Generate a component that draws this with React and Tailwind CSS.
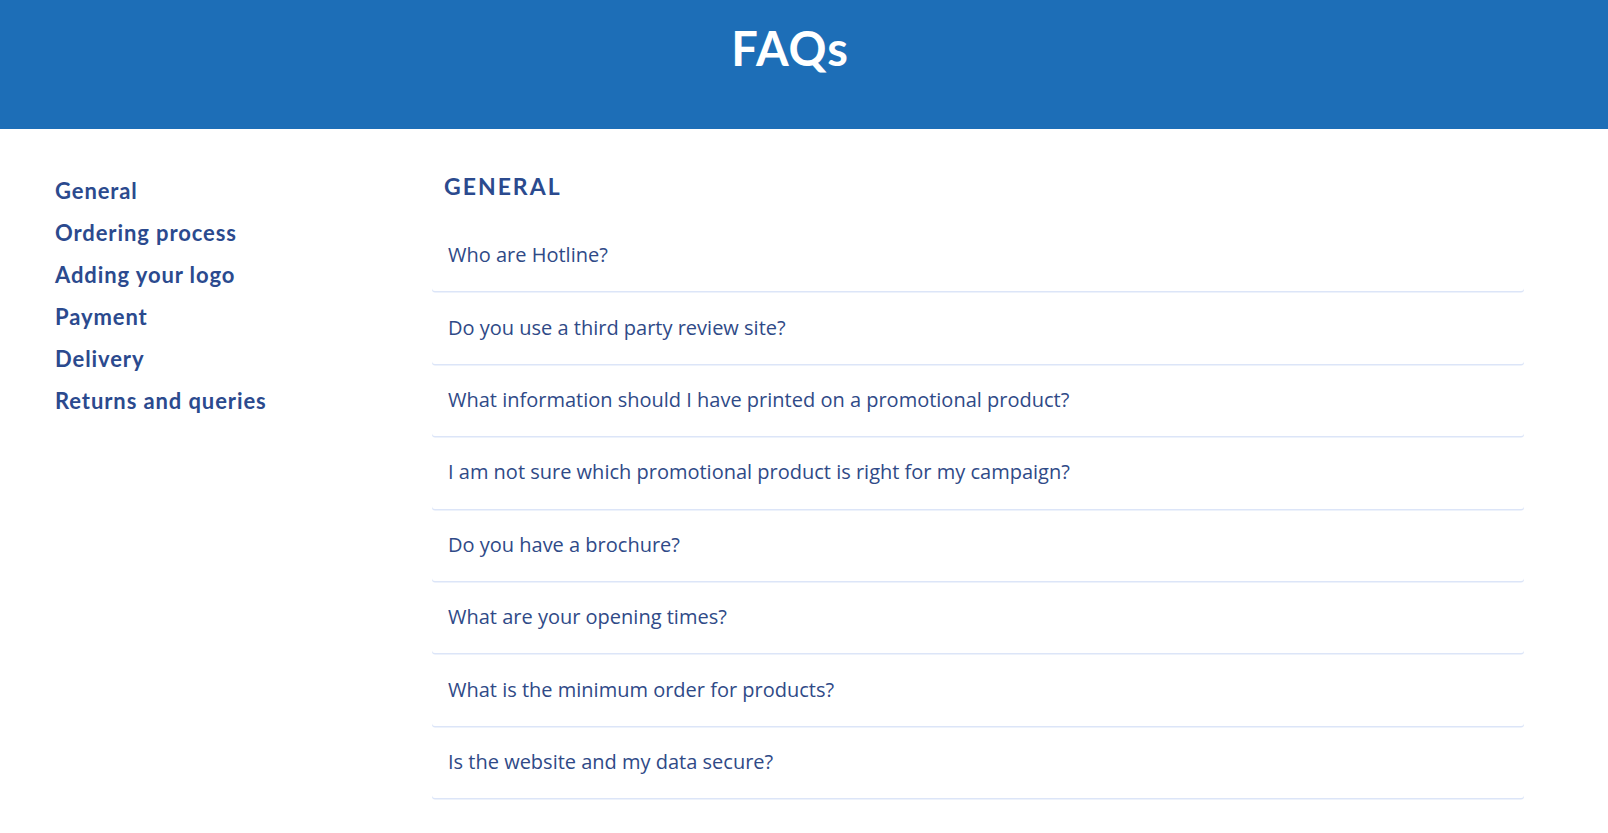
import React from 'react';

const categories = [
  'General',
  'Ordering process',
  'Adding your logo',
  'Payment',
  'Delivery',
  'Returns and queries',
];

const questions = [
  'Who are Hotline?',
  'Do you use a third party review site?',
  'What information should I have printed on a promotional product?',
  'I am not sure which promotional product is right for my campaign?',
  'Do you have a brochure?',
  'What are your opening times?',
  'What is the minimum order for products?',
  'Is the website and my data secure?',
];

export default function App() {
  return (
    <div className="min-h-screen bg-white font-['Open_Sans',sans-serif]">
      <header className="h-[129px] bg-[#1d6eb7] flex justify-center pt-[20px] pr-[28px]">
        <h1 className="text-[47px] leading-[56px] font-bold text-white font-['Lato',sans-serif] tracking-[1px]">
          FAQs
        </h1>
      </header>

      <div className="flex pl-[55px] pr-[84px] pt-[44px]">
        <nav className="w-[377px] shrink-0 flex flex-col gap-[14px] pt-[4px]">
          {categories.map((c) => (
            <a
              key={c}
              href="#"
              className="text-[22px] leading-[28px] font-bold text-[#2b4a8e] font-['Lato',sans-serif] tracking-[0.9px]"
            >
              {c}
            </a>
          ))}
        </nav>

        <main className="flex-1">
          <h2 className="pl-[12px] text-[23px] leading-[26px] font-bold tracking-[2px] text-[#2b4a8e] font-['Lato',sans-serif]">
            GENERAL
          </h2>
          <ul className="mt-[20px]">
            {questions.map((q) => (
              <li
                key={q}
                className="h-[72.4px] flex items-center pl-[16px] rounded-[3px] shadow-[0_1.5px_0_0_#dce5f8] text-[20px] text-[#2f4a87]"
              >
                {q}
              </li>
            ))}
          </ul>
        </main>
      </div>
    </div>
  );
}
